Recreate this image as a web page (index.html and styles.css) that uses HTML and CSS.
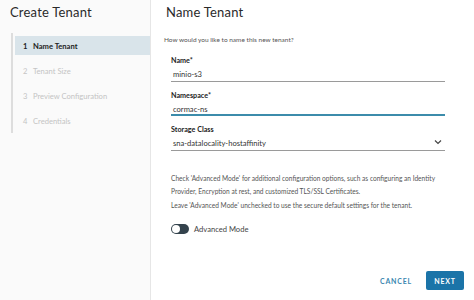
FILE: index.html
```html
<!DOCTYPE html>
<html>
<head>
<meta charset="utf-8">
<link rel="stylesheet" href="styles.css">
</head>
<body>
<div class="wizard">
  <aside class="side">
    <h1 class="side-title">Create Tenant</h1>
    <ol class="steps">
      <li class="step active"><span class="num">1</span>Name Tenant</li>
      <li class="step"><span class="num">2</span>Tenant Size</li>
      <li class="step"><span class="num">3</span>Preview Configuration</li>
      <li class="step"><span class="num">4</span>Credentials</li>
    </ol>
  </aside>
  <main class="main">
    <h2 class="title">Name Tenant</h2>
    <p class="intro">How would you like to name this new tenant?</p>
    <div class="field">
      <label class="label">Name*</label>
      <div class="input">minio-s3</div>
    </div>
    <div class="field">
      <label class="label">Namespace*</label>
      <div class="input focus">cormac-ns</div>
    </div>
    <div class="field">
      <label class="label">Storage Class</label>
      <div class="input select">sna-datalocality-hostaffinity
        <svg class="chev" width="8" height="6" viewBox="0 0 8 6"><path d="M1 1.5 L4 4.5 L7 1.5" fill="none" stroke="#444" stroke-width="1.2"/></svg>
      </div>
    </div>
    <div class="help">
      <p>Check 'Advanced Mode' for additional configuration options, such as configuring an Identity Provider, Encryption at rest, and customized TLS/SSL Certificates.</p>
      <p>Leave 'Advanced Mode' unchecked to use the secure default settings for the tenant.</p>
    </div>
    <div class="toggle-row">
      <span class="toggle"><span class="knob"></span></span>
      <span class="toggle-label">Advanced Mode</span>
    </div>
    <div class="actions">
      <button class="btn cancel">CANCEL</button>
      <button class="btn next">NEXT</button>
    </div>
  </main>
</div>
</body>
</html>
```
FILE: styles.css
```css
* { box-sizing: border-box; }
html, body { margin: 0; padding: 0; }
body {
  width: 474px;
  height: 300px;
  overflow: hidden;
  background: #fff;
  font-family: Lato, "Noto Sans", sans-serif;
  color: #333;
}
.wizard {
  display: flex;
  height: 300px;
}
.side {
  width: 151px;
  flex: none;
  background: #fafafa;
  border-right: 1px solid #e6e6e6;
  padding-top: 4px;
}
.side-title {
  margin: 0 0 0 10px;
  font-size: 13px;
  font-weight: 400;
  color: #2a2a2a;
  line-height: 16px;
  letter-spacing: 0.2px;
}
.steps {
  list-style: none;
  margin: 13px 0 0 11px;
  padding: 3px 0 0 0;
  border-left: 2px solid #dddddd;
  height: 100px;
}
.step {
  display: flex;
  align-items: center;
  height: 19px;
  margin-left: 2px;
  margin-bottom: 6px;
  padding-left: 8px;
  font-size: 7.6px;
  color: #c4c4c4;
}
.step .num { width: 10px; }
.step.active {
  background: #d9e4ea;
  color: #222;
  font-weight: 700;
}
.main {
  flex: 1;
  position: relative;
  padding: 4px 29px 0 13px;
}
.title {
  margin: 0 0 0 2px;
  font-size: 13px;
  font-weight: 400;
  color: #2a2a2a;
  line-height: 16px;
  letter-spacing: 0.2px;
}
.intro {
  margin: 16px 0 12px 0;
  font-size: 6.5px;
  line-height: 8px;
  color: #555;
}
.field {
  margin-left: 7px;
  margin-bottom: 9px;
}
.label {
  display: block;
  font-size: 7.2px;
  font-weight: 700;
  color: #222;
  line-height: 10px;
}
.input {
  position: relative;
  font-size: 7.6px;
  color: #333;
  padding: 4px 0 1.5px 2px;
  border-bottom: 1px solid #9a9a9a;
  line-height: 9px;
}
.input.focus {
  border-bottom: 2px solid #3c8cab;
  padding-bottom: 0.5px;
}
.select .chev {
  position: absolute;
  right: 3px;
  top: 4px;
}
.help {
  margin: 21px 0 0 7px;
  font-size: 6.6px;
  color: #555;
  line-height: 13.5px;
}
.help p { margin: 0; }
.toggle-row {
  display: flex;
  align-items: center;
  margin: 11.5px 0 0 7px;
}
.toggle {
  position: relative;
  width: 18px;
  height: 10px;
  border-radius: 5px;
  background: #34434d;
  margin-right: 5px;
}
.knob {
  position: absolute;
  left: 1px;
  top: 1px;
  width: 8px;
  height: 8px;
  border-radius: 50%;
  background: #fff;
}
.toggle-label {
  font-size: 7.6px;
  color: #444;
}
.actions {
  position: absolute;
  right: 10px;
  bottom: 10px;
  display: flex;
  gap: 14px;
  align-items: center;
}
.btn {
  font-family: Lato, "Noto Sans", sans-serif;
  font-size: 7px;
  font-weight: 700;
  letter-spacing: 0.8px;
  border: none;
  border-radius: 2px;
  cursor: pointer;
}
.cancel {
  background: none;
  color: #3b87b0;
  padding: 0;
}
.next {
  background: #1b74a8;
  color: #fff;
  width: 38px;
  height: 19px;
  padding: 0;
}
```
